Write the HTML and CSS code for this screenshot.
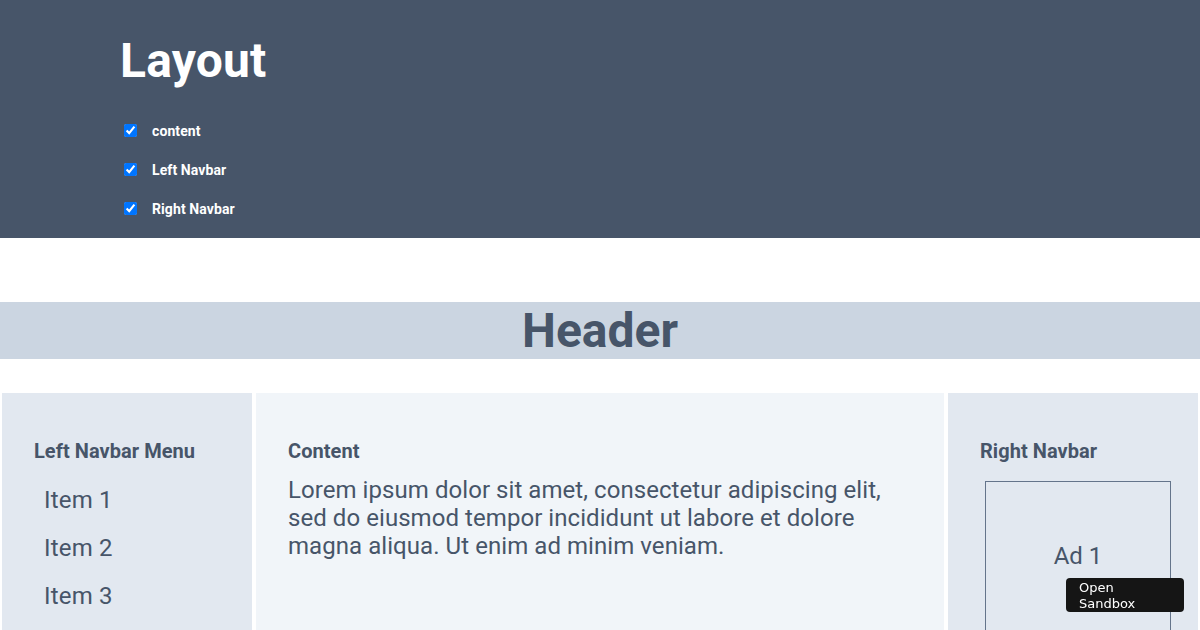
FILE: index.html
```html
<!DOCTYPE html>
<html>
<head>
<meta charset="utf-8">
<title>Layout</title>
<link rel="stylesheet" href="styles.css">
</head>
<body>
<section class="controls">
  <h1 class="title">Layout</h1>
  <div class="options">
    <label class="option"><input type="checkbox" checked><span>content</span></label>
    <label class="option"><input type="checkbox" checked><span>Left Navbar</span></label>
    <label class="option"><input type="checkbox" checked><span>Right Navbar</span></label>
  </div>
</section>
<header class="page-header">Header</header>
<main class="columns">
  <nav class="col col-left">
    <h3 class="col-title">Left Navbar Menu</h3>
    <ul class="menu">
      <li>Item 1</li>
      <li>Item 2</li>
      <li>Item 3</li>
    </ul>
  </nav>
  <article class="col col-content">
    <h3 class="col-title">Content</h3>
    <p class="lorem">Lorem ipsum dolor sit amet, consectetur adipiscing elit, sed do eiusmod tempor incididunt ut labore et dolore magna aliqua. Ut enim ad minim veniam.</p>
  </article>
  <aside class="col col-right">
    <h3 class="col-title">Right Navbar</h3>
    <div class="ad">Ad 1</div>
  </aside>
</main>
<a class="sandbox-badge">Open Sandbox</a>
</body>
</html>
```

FILE: styles.css
```css
html, body {
  margin: 0;
  padding: 0;
}
body {
  font-family: Roboto, "Liberation Sans", sans-serif;
  color: #475569;
  background: #ffffff;
  overflow: hidden;
}
.controls {
  background: #475569;
  padding: 33px 120px 20px;
  height: 238px;
  box-sizing: border-box;
}
.title {
  margin: 0;
  font-size: 48px;
  font-weight: 700;
  color: #ffffff;
  line-height: 56px;
  letter-spacing: 0.2px;
}
.options {
  margin-top: 32px;
  display: flex;
  flex-direction: column;
  gap: 20px;
}
.option {
  display: flex;
  align-items: center;
  height: 19px;
  font-size: 14px;
  font-weight: 700;
  color: #ffffff;
  letter-spacing: 0.1px;
}
.option input {
  margin: 3px 3px 3px 4px;
  width: 13px;
  height: 13px;
}
.option span {
  margin-left: 12px;
}
.page-header {
  margin-top: 64px;
  background: #cbd5e1;
  text-align: center;
  font-size: 48px;
  font-weight: 700;
  line-height: 57px;
  height: 57px;
  color: #475569;
}
.columns {
  margin-top: 34px;
  display: flex;
  gap: 4px;
  padding: 0 2px;
  height: 400px;
}
.col {
  padding: 32px;
  box-sizing: border-box;
}
.col-left, .col-right {
  width: 250px;
  background: #e2e8f0;
  flex: none;
}
.col-content {
  flex: 1;
  background: #f1f5f9;
}
.col-title {
  margin: 15px 0 0;
  font-size: 20px;
  font-weight: 700;
  line-height: 23px;
  color: #475569;
  letter-spacing: 0.05px;
}
.menu {
  list-style: none;
  margin: 0;
  padding: 3px 0 0 10px;
}
.menu li {
  font-size: 24px;
  line-height: 28px;
  margin-top: 20px;
  letter-spacing: 0.2px;
}
.lorem {
  margin: 13px 0 0;
  font-size: 24px;
  line-height: 28px;
  letter-spacing: 0.06px;
}
.ad {
  margin: 18px 0 0 5px;
  width: 186px;
  box-sizing: border-box;
  border: 1px solid #64748b;
  padding: 60px 0;
  height: 300px;
  text-align: center;
  font-size: 24px;
  line-height: 28px;
}
.sandbox-badge {
  position: fixed;
  right: 16px;
  bottom: 18px;
  width: 118px;
  height: 34px;
  box-sizing: border-box;
  padding: 2px 40px 0 13px;
  background: #151515;
  border-radius: 4px;
  color: #ffffff;
  font-family: "DejaVu Sans", sans-serif;
  font-size: 13px;
  line-height: 16px;
}
```
